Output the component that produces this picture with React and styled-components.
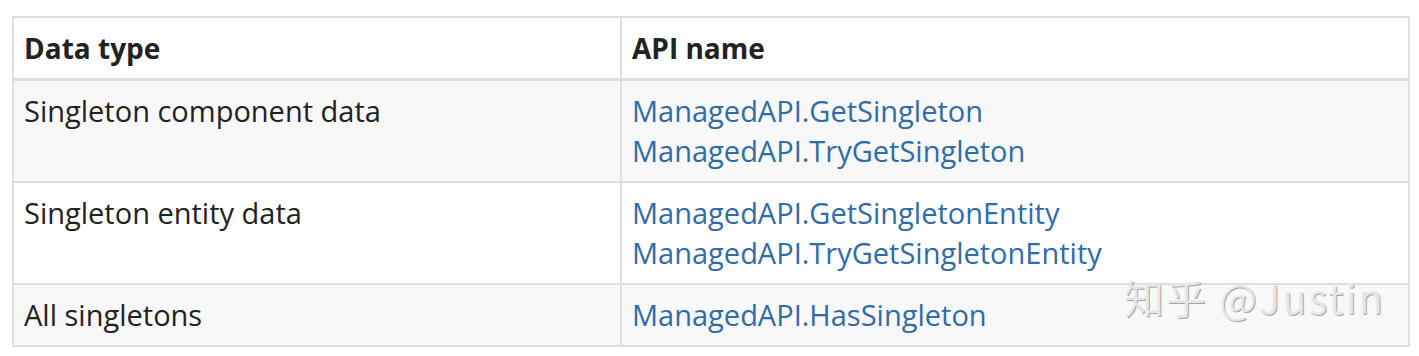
import React from "react";
import styled, { createGlobalStyle } from "styled-components";

const Global = createGlobalStyle`
  html, body { margin: 0; padding: 0; background: #fff; }
  body { font-family: "Open Sans", "Noto Sans", sans-serif; }
`;

const Page = styled.div`
  position: relative;
  padding: 16px 9px 0 12px;
  width: 1419px;
  height: 356px;
  box-sizing: border-box;
`;

const Table = styled.table`
  width: 1398px;
  border-collapse: collapse;
  border: 2px solid #dedede;
  font-size: 29px;
  color: #222;
`;

const HeadCell = styled.th`
  text-align: left;
  font-weight: 700;
  font-size: 28px;
  height: 60px;
  padding: 0 10px;
  border-left: 2px solid #dedede;
  border-bottom: 3px solid #dedede;
  vertical-align: middle;
  &:first-child { border-left: none; width: 586px; }
`;

const Row = styled.tr`
  background: ${(p) => (p.$striped ? "#f8f8f8" : "#fff")};
  border-bottom: 2px solid #dedede;
`;

const Cell = styled.td`
  padding: 10px 10px;
  line-height: 40px;
  vertical-align: top;
  border-left: 2px solid #dedede;
  &:first-child { border-left: none; }
`;

const ApiLink = styled.a`
  display: block;
  color: #2f6ca8;
  text-decoration: none;
`;

const Watermark = styled.div`
  position: absolute;
  left: 1124px;
  top: 268px;
  font-family: "Noto Sans CJK SC", "Noto Sans", sans-serif;
  font-size: 40px;
  color: rgba(236, 236, 236, 0.92);
  text-shadow: 1px 1px 0 rgba(110, 110, 110, 0.6);
  letter-spacing: 2px;
  pointer-events: none;
`;

const rows = [
  { type: "Singleton component data", apis: ["ManagedAPI.GetSingleton", "ManagedAPI.TryGetSingleton"] },
  { type: "Singleton entity data", apis: ["ManagedAPI.GetSingletonEntity", "ManagedAPI.TryGetSingletonEntity"] },
  { type: "All singletons", apis: ["ManagedAPI.HasSingleton"] },
];

export default function App() {
  return (
    <Page>
      <Global />
      <Table>
        <thead>
          <tr>
            <HeadCell>Data type</HeadCell>
            <HeadCell>API name</HeadCell>
          </tr>
        </thead>
        <tbody>
          {rows.map((r, i) => (
            <Row key={r.type} $striped={i % 2 === 0}>
              <Cell>{r.type}</Cell>
              <Cell>
                {r.apis.map((a) => (
                  <ApiLink key={a} href="#">{a}</ApiLink>
                ))}
              </Cell>
            </Row>
          ))}
        </tbody>
      </Table>
      <Watermark>知乎 @Justin</Watermark>
    </Page>
  );
}
